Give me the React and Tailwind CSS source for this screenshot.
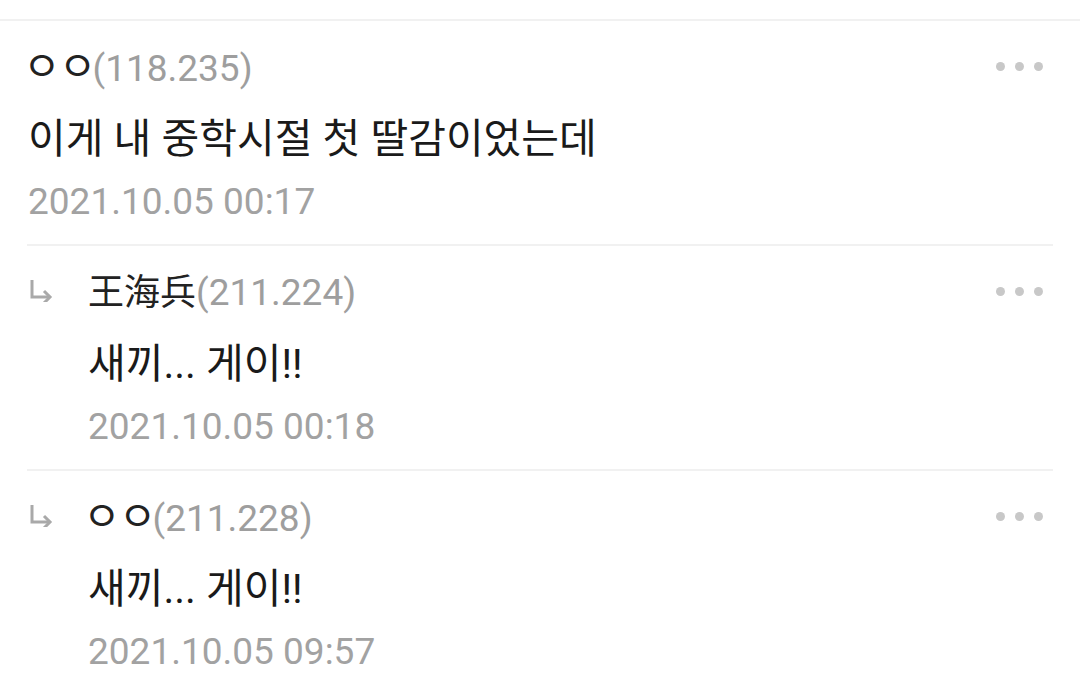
import { Fragment } from "react";

const comments = [
  { id: 1, name: "ㅇㅇ", ip: "118.235", text: "이게 내 중학시절 첫 딸감이었는데", date: "2021.10.05 00:17", reply: false },
  { id: 2, name: "王海兵", ip: "211.224", text: "새끼... 게이!!", date: "2021.10.05 00:18", reply: true },
  { id: 3, name: "ㅇㅇ", ip: "211.228", text: "새끼... 게이!!", date: "2021.10.05 09:57", reply: true },
];

const font = "font-['Roboto','Noto_Sans_CJK_KR','Noto_Sans_CJK_SC',sans-serif]";
const isHangul = (s) => /[\u3131-\u318E\uAC00-\uD7A3]/.test(s);

const MoreDots = () => (
  <div className="flex items-center gap-[10px]">
    <span className="size-[9px] rounded-full bg-[#c8c8c8]" />
    <span className="size-[9px] rounded-full bg-[#c8c8c8]" />
    <span className="size-[9px] rounded-full bg-[#c8c8c8]" />
  </div>
);

const ReplyArrow = () => (
  <svg width="24" height="22" viewBox="0 0 24 22" fill="none" stroke="#a9a9a9" strokeWidth="3">
    <path d="M3 0 V17 H21" />
    <path d="M15 11 L21 17 L15 23" strokeLinejoin="miter" />
  </svg>
);

const Comment = ({ comment }) => (
  <div className="flex pt-[16px] pb-[12px]">
    <div className={comment.reply ? "w-[88px] shrink-0" : "w-[28px] shrink-0"}>
      {comment.reply && (
        <div className="flex h-[60px] items-center pl-[29px] pb-[2px]">
          <ReplyArrow />
        </div>
      )}
    </div>
    <div className="flex-1">
      <div className="flex h-[60px] items-center justify-between pr-[37px]">
        <div className="text-[37px] leading-none">
          {isHangul(comment.name) ? (
            <span className="ml-[-5px] mr-[-2px] text-[41px] tracking-[-2px] text-[#222]">{comment.name}</span>
          ) : (
            <span className="text-[36px] text-[#222]">{comment.name}</span>
          )}
          <span className="text-[#9e9e9e]">({comment.ip})</span>
        </div>
        <div className="pb-[1px]">
          <MoreDots />
        </div>
      </div>
      <div className="mt-[13px] flex h-[60px] items-center text-[41px] text-[#1a1a1a]">{comment.text}</div>
      <div className="mt-[2px] flex h-[60px] items-center text-[37px] text-[#a2a2a2]">{comment.date}</div>
    </div>
  </div>
);

export default function App() {
  return (
    <div className={`h-[683px] w-[1080px] overflow-hidden bg-white ${font}`}>
      <div className="h-[19px]" />
      <div className="h-[2px] bg-[#f1f1f1]" />
      {comments.map((c, i) => (
        <Fragment key={c.id}>
          <Comment comment={c} />
          {i < comments.length - 1 && <div className="mx-[27px] h-[2px] bg-[#f1f1f1]" />}
        </Fragment>
      ))}
    </div>
  );
}
